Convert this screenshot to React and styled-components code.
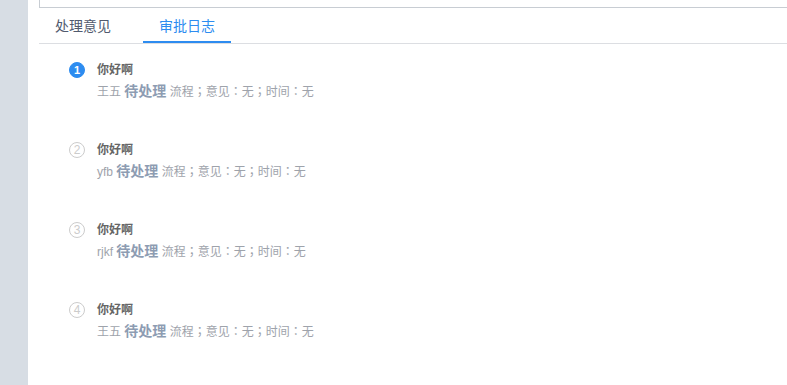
import React, { useState } from 'react';
import styled, { createGlobalStyle } from 'styled-components';

const GlobalStyle = createGlobalStyle`
  html, body {
    margin: 0;
    padding: 0;
    background: #fff;
  }
  body {
    font-family: "Liberation Sans", "Noto Sans CJK SC", sans-serif;
    font-size: 12px;
    color: #515a6e;
  }
`;

const StyledLayout = styled.div`
  display: flex;
  width: 100%;
  height: 385px;
  overflow: hidden;
`;

const StyledSidebar = styled.aside`
  width: 28px;
  flex-shrink: 0;
  background: #d7dde4;
`;

const StyledMain = styled.main`
  flex: 1;
  background: #fff;
  padding-left: 11px;
  overflow: hidden;
`;

const StyledOpinionBox = styled.div`
  height: 7px;
  margin-right: -20px;
  border: 1px solid #c8cdd3;
  border-top: none;
`;

const StyledTabBar = styled.nav`
  display: flex;
  border-bottom: 1px solid #dcdee2;
`;

const StyledTab = styled.button`
  margin: 0 16px 0 0;
  padding: 8px 16px 7px;
  border: none;
  border-bottom: 2px solid ${({ active }) => (active ? '#2d8cf0' : 'transparent')};
  background: none;
  font-family: "Noto Sans CJK SC", sans-serif;
  font-size: 14px;
  line-height: 18px;
  color: ${({ active }) => (active ? '#2d8cf0' : '#515a6e')};
  cursor: pointer;
`;

const StyledSteps = styled.ol`
  list-style: none;
  margin: 0;
  padding: 18px 0 0 30px;
`;

const StyledStep = styled.li`
  display: flex;
  align-items: flex-start;
  height: 80px;
`;

const StyledStepHead = styled.span`
  width: 16px;
  height: 16px;
  flex-shrink: 0;
  box-sizing: border-box;
  border-radius: 50%;
  border: 1px solid ${({ current }) => (current ? '#2d8cf0' : '#ccc')};
  background: ${({ current }) => (current ? '#2d8cf0' : '#fff')};
  color: ${({ current }) => (current ? '#fff' : '#ccc')};
  font-family: "Liberation Sans", sans-serif;
  font-size: ${({ current }) => (current ? '11px' : '12px')};
  font-weight: ${({ current }) => (current ? 'bold' : 'normal')};
  line-height: 14px;
  text-align: center;
`;

const StyledStepBody = styled.div`
  margin-left: 12px;
`;

const StyledStepTitle = styled.div`
  font-family: "Noto Sans CJK SC", sans-serif;
  font-size: 12px;
  font-weight: bold;
  line-height: 14px;
  color: #666;
`;

const StyledStepDesc = styled.div`
  margin-top: 7px;
  font-family: "Liberation Sans", "Noto Sans CJK TC", sans-serif;
  font-size: 12px;
  line-height: 18px;
  color: #9ea3ab;
`;

const StyledStatus = styled.b`
  font-family: "Noto Sans CJK SC", sans-serif;
  font-size: 14px;
  line-height: 1;
  color: #8d9cb2;
`;

const tabs = ['处理意见', '审批日志'];

const logs = [
  { id: 1, user: '王五' },
  { id: 2, user: 'yfb' },
  { id: 3, user: 'rjkf' },
  { id: 4, user: '王五' }
];

const App = () => {
  const [activeTab, setActiveTab] = useState(1);
  return (
    <>
      <GlobalStyle />
      <StyledLayout>
        <StyledSidebar />
        <StyledMain>
          <StyledOpinionBox />
          <StyledTabBar>
            {tabs.map((tab, i) => (
              <StyledTab key={tab} active={i === activeTab} onClick={() => setActiveTab(i)}>
                {tab}
              </StyledTab>
            ))}
          </StyledTabBar>
          <StyledSteps>
            {logs.map((log, i) => (
              <StyledStep key={log.id}>
                <StyledStepHead current={i === 0}>{log.id}</StyledStepHead>
                <StyledStepBody>
                  <StyledStepTitle>你好啊</StyledStepTitle>
                  <StyledStepDesc>
                    {log.user} <StyledStatus>待处理</StyledStatus> 流程；意见：无；时间：无
                  </StyledStepDesc>
                </StyledStepBody>
              </StyledStep>
            ))}
          </StyledSteps>
        </StyledMain>
      </StyledLayout>
    </>
  );
};

export default App;
